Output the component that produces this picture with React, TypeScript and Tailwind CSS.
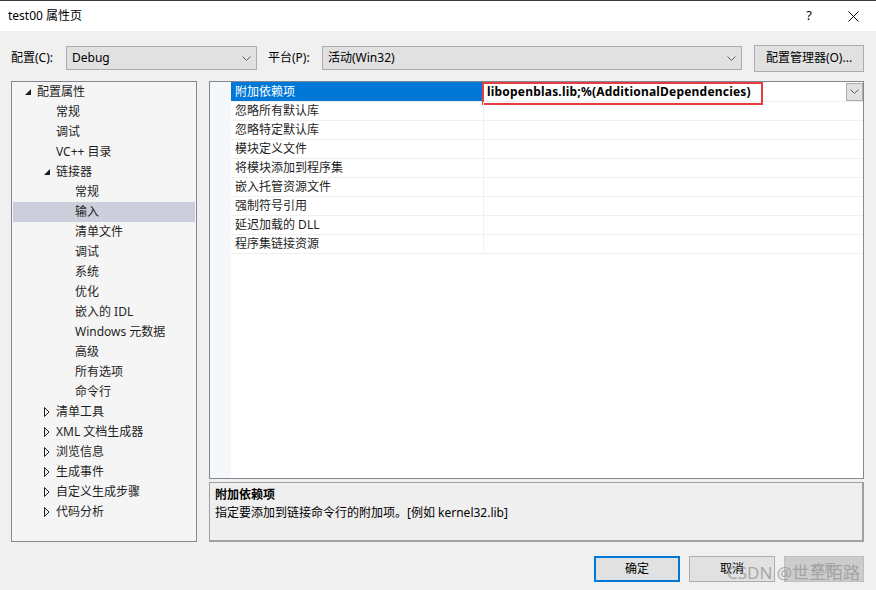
import React from "react"

const font = { fontFamily: '"Noto Sans", "Noto Sans CJK SC", sans-serif' }

type Node = { label: string; level: number; state?: "open" | "closed"; selected?: boolean }

const tree: Node[] = [
  { label: "配置属性", level: 0, state: "open" },
  { label: "常规", level: 1 },
  { label: "调试", level: 1 },
  { label: "VC++ 目录", level: 1 },
  { label: "链接器", level: 1, state: "open" },
  { label: "常规", level: 2 },
  { label: "输入", level: 2, selected: true },
  { label: "清单文件", level: 2 },
  { label: "调试", level: 2 },
  { label: "系统", level: 2 },
  { label: "优化", level: 2 },
  { label: "嵌入的 IDL", level: 2 },
  { label: "Windows 元数据", level: 2 },
  { label: "高级", level: 2 },
  { label: "所有选项", level: 2 },
  { label: "命令行", level: 2 },
  { label: "清单工具", level: 1, state: "closed" },
  { label: "XML 文档生成器", level: 1, state: "closed" },
  { label: "浏览信息", level: 1, state: "closed" },
  { label: "生成事件", level: 1, state: "closed" },
  { label: "自定义生成步骤", level: 1, state: "closed" },
  { label: "代码分析", level: 1, state: "closed" },
]

const props = [
  "附加依赖项",
  "忽略所有默认库",
  "忽略特定默认库",
  "模块定义文件",
  "将模块添加到程序集",
  "嵌入托管资源文件",
  "强制符号引用",
  "延迟加载的 DLL",
  "程序集链接资源",
]

function Chevron() {
  return (
    <svg width="9" height="5" viewBox="0 0 9 5" className="shrink-0">
      <polyline points="0.5,0.5 4.5,4.5 8.5,0.5" fill="none" stroke="#606060" strokeWidth="1" />
    </svg>
  )
}

function Select({ value, className }: { value: string; className: string }) {
  return (
    <div className={`h-[24px] border border-[#adadad] bg-[#e1e1e1] flex items-center justify-between pl-[5px] pr-[5px] text-[12px] text-black ${className}`}>
      <span>{value}</span>
      <Chevron />
    </div>
  )
}

function Toggle({ state }: { state?: "open" | "closed" }) {
  if (state === "open")
    return (
      <svg width="6" height="6" viewBox="0 0 6 6">
        <polygon points="6,0 6,6 0,6" fill="#1e1e1e" />
      </svg>
    )
  if (state === "closed")
    return (
      <svg width="6" height="10" viewBox="0 0 6 10">
        <polygon points="0.5,0.5 5,5 0.5,9.5" fill="none" stroke="#1e1e1e" strokeWidth="1" />
      </svg>
    )
  return null
}

function Btn({ label, primary, disabled }: { label: string; primary?: boolean; disabled?: boolean }) {
  return (
    <div
      className={`h-[26px] flex items-center justify-center text-[12px] ${
        primary
          ? "w-[86px] border-2 border-[#0078d7] bg-[#e1e1e1] text-black"
          : disabled
          ? "w-[80px] border border-[#bfbfbf] bg-[#cccccc] text-[#a8a8a8]"
          : "w-[86px] border border-[#adadad] bg-[#e1e1e1] text-black"
      }`}
    >
      {label}
    </div>
  )
}

export default function App() {
  return (
    <div className="relative w-[876px] h-[590px] overflow-hidden bg-[#f0f0f0] flex flex-col" style={font}>
      {/* title bar */}
      <div className="h-[31px] bg-white border-t border-[#3c3c3c] flex items-center shrink-0">
        <span className="pl-[8px] text-[12px] text-black">test00 属性页</span>
        <div className="ml-auto flex items-center">
          <span className="w-[46px] pl-[4px] text-center text-[13px] text-black">?</span>
          <div className="w-[46px] flex justify-center">
            <svg width="11" height="11" viewBox="0 0 11 11">
              <path d="M0.5 0.5 L10.5 10.5 M10.5 0.5 L0.5 10.5" stroke="#000" strokeWidth="1" />
            </svg>
          </div>
        </div>
      </div>

      {/* config row */}
      <div className="flex items-center h-[28px] mt-[13px] pl-[11px] text-[12px] text-black">
        <span className="w-[55px]">配置(C):</span>
        <Select value="Debug" className="w-[191px]" />
        <span className="ml-[11px] w-[54px]">平台(P):</span>
        <Select value="活动(Win32)" className="w-[420px]" />
        <div className="ml-[12px] w-[110px] h-[27px] border border-[#adadad] bg-[#e1e1e1] flex items-center justify-center">
          配置管理器(O)...
        </div>
      </div>

      {/* main area */}
      <div className="flex mt-[9px] pl-[11px] pr-[12px] h-[461px]">
        {/* tree */}
        <div className="w-[186px] border border-[#828790] bg-[#f5f5f5] text-[12px] text-[#1e1e1e]">
          {tree.map((n, i) => (
            <div
              key={i}
              className={`h-[20px] flex items-center mx-[1px] ${n.selected ? "bg-[#cccedb]" : ""}`}
            >
              <div
                className={`flex items-center justify-center w-[19px] ${
                  n.level === 0 ? "ml-[5px]" : n.level === 1 ? "ml-[24px]" : "ml-[43px]"
                }`}
              >
                <Toggle state={n.state} />
              </div>
              <span>{n.label}</span>
            </div>
          ))}
        </div>

        {/* right side */}
        <div className="ml-[12px] flex-1 flex flex-col">
          <div className="h-[399px] border border-[#828790] bg-white flex">
            <div className="w-[21px] bg-[#f5f7fa]" />
            <div className="flex-1 flex flex-col">
              {props.map((p, i) => (
                <div key={i} className={`flex border-b border-[#f0f0f0] ${i === 0 ? "h-[20px]" : "h-[19px]"}`}>
                  <div
                    className={`w-[252px] flex items-center pl-[4px] text-[12px] ${
                      i === 0 ? "bg-[#0078d7] text-white" : "text-[#1e1e1e]"
                    }`}
                  >
                    {p}
                  </div>
                  <div className="flex-1 border-l border-[#f0f0f0] relative flex items-center">
                    {i === 0 && (
                      <>
                        <div className="absolute left-[-2px] top-0 w-[281px] h-[23px] border-2 border-[#e83a3f]" />
                        <span className="pl-[3px] text-[12px] font-bold tracking-[0.2px] text-black">
                          libopenblas.lib;%(AdditionalDependencies)
                        </span>
                        <div className="ml-auto w-[17px] h-[18px] border border-[#adadad] bg-[#e1e1e1] flex items-center justify-center">
                          <Chevron />
                        </div>
                      </>
                    )}
                  </div>
                </div>
              ))}
            </div>
          </div>
          <div className="mt-[3px] h-[60px] border border-[#a0a0a0] border-b-2 border-r-2 border-b-[#a0a0a0] bg-[#efefef] pl-[5px] pt-[3px] text-[12px] text-black leading-[18px]">
            <div className="font-bold">附加依赖项</div>
            <div>指定要添加到链接命令行的附加项。[例如 kernel32.lib]</div>
          </div>
        </div>
      </div>

      {/* bottom buttons */}
      <div className="flex justify-end items-center gap-[9px] pr-[12px] mt-[14px]">
        <Btn label="确定" primary />
        <Btn label="取消" />
        <Btn label="应用" disabled />
      </div>

      {/* watermark */}
      <div className="absolute left-[727px] top-[560px] text-[17px] text-[#9a9a9a] opacity-80 pointer-events-none">
        CSDN @世至陌路
      </div>
    </div>
  )
}
